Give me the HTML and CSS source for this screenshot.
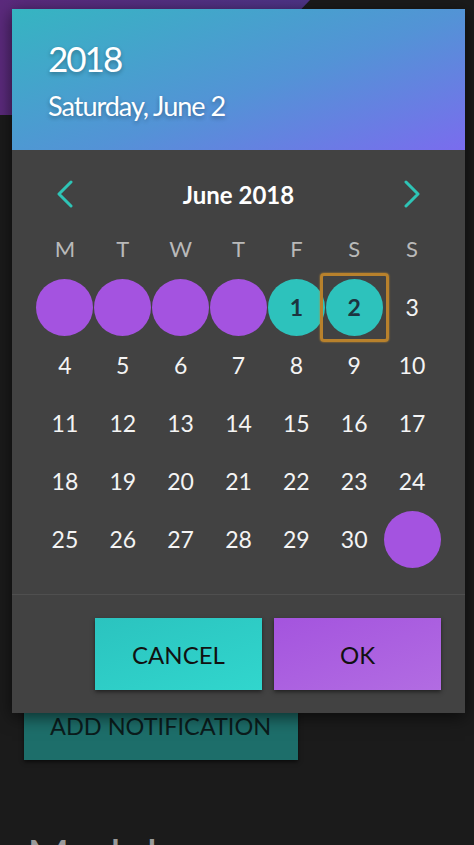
FILE: index.html
```html
<!DOCTYPE html>
<html>
<head>
    <title>Date Picker</title>
    <link rel="stylesheet" href="styles.css">
</head>
<body>
    <div class="page">
        <div class="hero"></div>
        <div class="add-button">ADD NOTIFICATION</div>
        <h1 class="section-title">Modules</h1>
    </div>

    <div class="dialog">
        <div class="dialog-header">
            <div class="year">2018</div>
            <div class="date">Saturday, June 2</div>
        </div>
        <div class="dialog-body">
            <div class="nav">
                <div class="arrow">
                    <svg width="18" height="28" viewBox="0 0 18 28"><polyline points="15,2 3,14 15,26" fill="none" stroke="#2ec4b6" stroke-width="3" stroke-linecap="round" stroke-linejoin="round"/></svg>
                </div>
                <div class="month">June 2018</div>
                <div class="arrow">
                    <svg width="18" height="28" viewBox="0 0 18 28"><polyline points="3,2 15,14 3,26" fill="none" stroke="#2ec4b6" stroke-width="3" stroke-linecap="round" stroke-linejoin="round"/></svg>
                </div>
            </div>
            <div class="weekdays">
                <div>M</div><div>T</div><div>W</div><div>T</div><div>F</div><div>S</div><div>S</div>
            </div>
            <div class="days">
                <div class="day"><span class="dot empty"></span></div>
                <div class="day"><span class="dot empty"></span></div>
                <div class="day"><span class="dot empty"></span></div>
                <div class="day"><span class="dot empty"></span></div>
                <div class="day"><span class="dot marked">1</span></div>
                <div class="day selected"><span class="dot marked">2</span></div>
                <div class="day"><span class="dot">3</span></div>
                <div class="day"><span class="dot">4</span></div>
                <div class="day"><span class="dot">5</span></div>
                <div class="day"><span class="dot">6</span></div>
                <div class="day"><span class="dot">7</span></div>
                <div class="day"><span class="dot">8</span></div>
                <div class="day"><span class="dot">9</span></div>
                <div class="day"><span class="dot">10</span></div>
                <div class="day"><span class="dot">11</span></div>
                <div class="day"><span class="dot">12</span></div>
                <div class="day"><span class="dot">13</span></div>
                <div class="day"><span class="dot">14</span></div>
                <div class="day"><span class="dot">15</span></div>
                <div class="day"><span class="dot">16</span></div>
                <div class="day"><span class="dot">17</span></div>
                <div class="day"><span class="dot">18</span></div>
                <div class="day"><span class="dot">19</span></div>
                <div class="day"><span class="dot">20</span></div>
                <div class="day"><span class="dot">21</span></div>
                <div class="day"><span class="dot">22</span></div>
                <div class="day"><span class="dot">23</span></div>
                <div class="day"><span class="dot">24</span></div>
                <div class="day"><span class="dot">25</span></div>
                <div class="day"><span class="dot">26</span></div>
                <div class="day"><span class="dot">27</span></div>
                <div class="day"><span class="dot">28</span></div>
                <div class="day"><span class="dot">29</span></div>
                <div class="day"><span class="dot">30</span></div>
                <div class="day"><span class="dot empty"></span></div>
            </div>
        </div>
        <div class="dialog-actions">
            <div class="btn cancel">CANCEL</div>
            <div class="btn ok">OK</div>
        </div>
    </div>
</body>
</html>
```
FILE: styles.css
```css
body {
    margin: 0;
    height: 845px;
    overflow: hidden;
    background-color: #1b1b1b;
    font-family: Lato, "Noto Sans", sans-serif;
}
.page {
    position: relative;
}
.hero {
    height: 115px;
    background: linear-gradient(90deg, #5b2a7c, #473a8d);
    clip-path: polygon(0 0, 310px 0, 200px 115px, 0 115px);
}
.add-button {
    width: 248px;
    height: 68px;
    margin: 577px 0 0 24px;
    padding-left: 26px;
    display: flex;
    align-items: center;
    font-size: 23.5px;
    color: #0b1c1c;
    background-color: #1d6e6a;
    box-shadow: 0 2px 4px rgba(0, 0, 0, 0.6);
}
.section-title {
    margin: 73px 0 0 27px;
    font-size: 46px;
    font-weight: 400;
    line-height: 46px;
    color: #9a9a9a;
}
.dialog {
    position: absolute;
    top: 9px;
    left: 12px;
    width: 453px;
    background-color: #424242;
    box-shadow: 0 4px 16px rgba(0, 0, 0, 0.6);
}
.dialog-header {
    height: 141px;
    box-sizing: border-box;
    padding: 28px 0 0 36px;
    color: #fff;
    background: linear-gradient(160deg, #35b5c1 0%, #5393d6 55%, #7a6cee 100%);
    text-shadow: 0 2px 4px rgba(0, 0, 0, 0.3);
}
.year {
    font-size: 35px;
    line-height: 1.2;
    letter-spacing: -2px;
}
.date {
    margin-top: 11px;
    font-size: 27px;
    line-height: 1.2;
    letter-spacing: -1px;
}
.dialog-body {
    padding: 20px 24px 26px;
    border-bottom: 1px solid #4f4f4f;
}
.nav,
.weekdays,
.days {
    display: grid;
    grid-template-columns: repeat(7, 1fr);
}
.nav {
    height: 48px;
    align-items: center;
}
.arrow {
    display: flex;
    justify-content: center;
}
.month {
    grid-column: span 5;
    text-align: center;
    font-size: 24px;
    font-weight: 700;
    color: #fff;
}
.weekdays {
    height: 60px;
    align-items: center;
    text-align: center;
    font-size: 22px;
    color: #b9b9b9;
}
.day {
    position: relative;
    height: 58px;
    display: flex;
    align-items: center;
    justify-content: center;
}
.dot {
    width: 57px;
    height: 57px;
    border-radius: 50%;
    display: flex;
    align-items: center;
    justify-content: center;
    font-size: 23px;
    color: #f4f4f4;
}
.dot.empty {
    background-color: #a453e0;
}
.dot.marked {
    background-color: #2dc2bc;
    color: #1c3440;
    font-weight: 700;
}
.day.selected::after {
    content: "";
    position: absolute;
    width: 63px;
    height: 63px;
    border: 3px solid #b8812c;
    border-radius: 4px;
    box-shadow: 0 0 2px #c8902e;
}
.dialog-actions {
    display: flex;
    justify-content: flex-end;
    gap: 12px;
    padding: 23px 24px;
}
.btn {
    width: 167px;
    height: 72px;
    display: flex;
    align-items: center;
    justify-content: center;
    font-size: 24px;
    color: #111;
    box-shadow: 0 2px 4px rgba(0, 0, 0, 0.5);
}
.cancel {
    background: linear-gradient(160deg, #2bc3bf, #31d6cd);
}
.ok {
    background: linear-gradient(160deg, #a454de, #b26ce2);
}
```
